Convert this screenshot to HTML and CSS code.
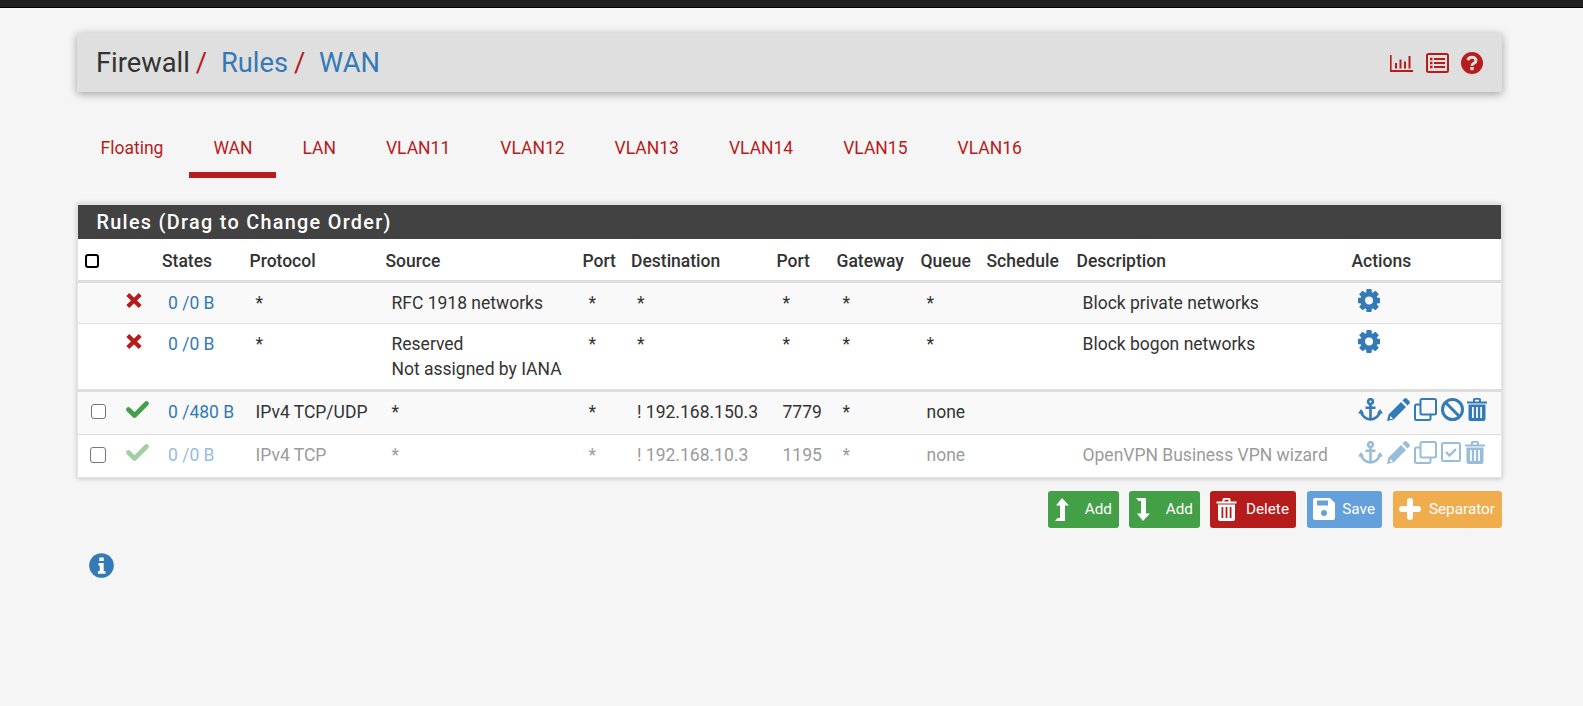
FILE: index.html
```html
<!DOCTYPE html>
<html lang="en">
<head>
<meta charset="utf-8">
<title>Firewall: Rules: WAN</title>
<link rel="stylesheet" href="styles.css">
</head>
<body>
<svg class="sprite" aria-hidden="true">
  <symbol id="i-bars" viewBox="0 0 23 17"><path fill="currentColor" d="M0 0h1.600v15H23v2H0zM5 8h2v5.500H5zM9.500 4.500h2v9h-2zM14 6.500h2v7h-2zM18.500 1h2v12.500h-2z"/></symbol>
  <symbol id="i-list" viewBox="0 0 23 20"><g fill="none" stroke="currentColor"><rect x="1" y="1" width="21" height="18" rx="1.500" stroke-width="2"/><path stroke-width="2" d="M8 6h11M8 10h11M8 14h11"/></g><path fill="currentColor" d="M4 4.800h2.500v2.400H4zM4 8.800h2.500v2.400H4zM4 12.800h2.500v2.400H4z"/></symbol>
  <symbol id="i-help" viewBox="0 0 22 22"><circle cx="11" cy="11" r="11" fill="currentColor"/><path fill="none" stroke="#dfdfdf" stroke-width="3" d="M7 8.200c.4-2 2-3 4-3 2.300 0 4 1.300 4 3.200 0 2.800-4 2.800-4 5.300"/><rect x="9.300" y="15" width="3.400" height="3.200" fill="#dfdfdf"/></symbol>
  <symbol id="i-times" viewBox="0 0 16 15"><path fill="none" stroke="currentColor" stroke-width="4.200" d="M1.800 1.500l12.400 12M14.200 1.500l-12.400 12"/></symbol>
  <symbol id="i-check" viewBox="0 0 23 17"><path fill="none" stroke="currentColor" stroke-width="4.600" stroke-linecap="round" stroke-linejoin="round" d="M2.500 8.500l6 6L20.500 2.500"/></symbol>
  <symbol id="i-cog" viewBox="0 0 22 23"><g fill="currentColor"><g id="cog-teeth"><rect x="8.300" y="0" width="5.400" height="5" rx="1"/><rect x="8.300" y="18" width="5.400" height="5" rx="1"/></g><use href="#cog-teeth" transform="rotate(90 11 11.500)"/><use href="#cog-teeth" transform="rotate(45 11 11.500)"/><use href="#cog-teeth" transform="rotate(135 11 11.500)"/></g><circle cx="11" cy="11.500" r="6.400" fill="none" stroke="currentColor" stroke-width="4.800"/></symbol>
  <symbol id="i-anchor" viewBox="0 0 25 23"><g fill="none" stroke="currentColor" stroke-width="2.600"><circle cx="12.500" cy="3.600" r="2.400"/><path d="M12.500 6v15.500M7.500 9.800h10M3 13c.5 5 5 8 9.500 8.500C17 21 21.500 18 22 13"/></g><path fill="currentColor" d="M0 15.500l3-4.500 3 4.500zM19 15.500l3-4.500 3 4.500z"/></symbol>
  <symbol id="i-pencil" viewBox="0 0 23 23"><path fill="currentColor" d="M0 23l1.500-6.500L14 4l5 5L6.500 21.500zM2.800 20.200l1 1 2.200-.6-2.600-2.600zM15.500 2.500L17.200.8a2 2 0 0 1 2.800 0l2.200 2.200a2 2 0 0 1 0 2.800L20.500 7.500z"/></symbol>
  <symbol id="i-clone" viewBox="0 0 23 23"><g fill="none" stroke="currentColor" stroke-width="2"><rect x="6.500" y="1" width="15.500" height="15.500" rx="1.500"/><path d="M6.500 6.500H2.500A1.500 1.500 0 0 0 1 8v12.500A1.500 1.500 0 0 0 2.500 22H15a1.500 1.500 0 0 0 1.500-1.500v-4"/></g></symbol>
  <symbol id="i-ban" viewBox="0 0 23 23"><g fill="none" stroke="currentColor" stroke-width="3"><circle cx="11.500" cy="11.500" r="10"/><path d="M4.500 4.500l14 14"/></g></symbol>
  <symbol id="i-trash" viewBox="0 0 20 23"><path fill="currentColor" fill-rule="evenodd" d="M0 3.500h6V1.500A1.500 1.500 0 0 1 7.500 0h5A1.500 1.500 0 0 1 14 1.500v2h6v2H0zM8 1.800v1.700h4V1.800zM1.500 6.500h17V21a2 2 0 0 1-2 2h-13a2 2 0 0 1-2-2zM5 9v11h1.800V9zM9.100 9v11h1.800V9zM13.200 9v11H15V9z"/></symbol>
  <symbol id="i-checkbox" viewBox="0 0 20 20"><g fill="none" stroke="currentColor"><rect x="1" y="1" width="18" height="18" rx="1.500" stroke-width="2"/><path stroke-width="2.400" d="M5 10l3.500 3.500L15 7"/></g></symbol>
  <symbol id="i-lvlup" viewBox="0 0 14 23"><path fill="currentColor" d="M7 0l7 7.500H10V23H0l2.500-3H5V7.500H1z"/></symbol>
  <symbol id="i-lvldown" viewBox="0 0 14 23"><path fill="currentColor" d="M0 0h10v15.500h4L7 23 1 15.500h4V3H2.500z"/></symbol>
  <symbol id="i-save" viewBox="0 0 22 22"><path fill="#fff" fill-rule="evenodd" d="M2 0h15l5 5v15a2 2 0 0 1-2 2H2a2 2 0 0 1-2-2V2a2 2 0 0 1 2-2zM4 2.500v5h11v-5zM11 12a3 3 0 1 0 0 6 3 3 0 0 0 0-6z"/></symbol>
  <symbol id="i-plus" viewBox="0 0 22 22"><path fill="none" stroke="#fff" stroke-width="6" stroke-linecap="round" d="M11 3v16M3 11h16"/></symbol>
  <symbol id="i-info" viewBox="0 0 25 25"><circle cx="12.500" cy="12.500" r="12.300" fill="currentColor"/><path fill="#fff" d="M10.300 4.500h4.400v3.500h-4.400zM9.500 10h5.200v8h1.800v2.800H9v-2.800h1.800v-5.200H9.500z"/></symbol>
</svg>

<div class="topbar"></div>
<main class="page">
  <header class="crumbs">
    <h1 class="crumb-title">Firewall<span class="sep">/</span><a class="crumb-link">Rules</a><span class="sep">/</span><a class="crumb-link">WAN</a></h1>
    <div class="crumb-icons">
      <svg class="ic-bars"><use href="#i-bars"/></svg>
      <svg class="ic-list"><use href="#i-list"/></svg>
      <svg class="ic-help"><use href="#i-help"/></svg>
    </div>
  </header>

  <nav class="tabs">
    <a class="tab">Floating</a>
    <a class="tab active">WAN</a>
    <a class="tab">LAN</a>
    <a class="tab">VLAN11</a>
    <a class="tab">VLAN12</a>
    <a class="tab">VLAN13</a>
    <a class="tab">VLAN14</a>
    <a class="tab">VLAN15</a>
    <a class="tab">VLAN16</a>
  </nav>

  <section class="panel">
    <h2 class="panel-title">Rules (Drag to Change Order)</h2>
    <table class="rules">
      <colgroup>
        <col class="c1"><col class="c2"><col class="c3"><col class="c4"><col class="c5"><col class="c6"><col class="c7"><col class="c8"><col class="c9"><col class="c10"><col class="c11"><col class="c12"><col class="c13">
      </colgroup>
      <thead>
        <tr>
          <th class="th-check"><input class="check-all" type="checkbox"></th>
          <th></th>
          <th>States</th>
          <th>Protocol</th>
          <th>Source</th>
          <th>Port</th>
          <th>Destination</th>
          <th>Port</th>
          <th>Gateway</th>
          <th>Queue</th>
          <th>Schedule</th>
          <th>Description</th>
          <th>Actions</th>
        </tr>
      </thead>
      <tbody>
        <tr class="r1 odd">
          <td></td>
          <td><svg class="ic-times"><use href="#i-times"/></svg></td>
          <td><a class="link">0 /0 B</a></td>
          <td>*</td>
          <td>RFC 1918 networks</td>
          <td>*</td>
          <td>*</td>
          <td>*</td>
          <td>*</td>
          <td>*</td>
          <td></td>
          <td>Block private networks</td>
          <td><div class="actions"><svg class="ic-cog"><use href="#i-cog"/></svg></div></td>
        </tr>
        <tr class="r2">
          <td></td>
          <td><svg class="ic-times"><use href="#i-times"/></svg></td>
          <td><a class="link">0 /0 B</a></td>
          <td>*</td>
          <td>Reserved<br>Not assigned by IANA</td>
          <td>*</td>
          <td>*</td>
          <td>*</td>
          <td>*</td>
          <td>*</td>
          <td></td>
          <td>Block bogon networks</td>
          <td><div class="actions"><svg class="ic-cog"><use href="#i-cog"/></svg></div></td>
        </tr>
        <tr class="r3 odd">
          <td class="td-check"><input class="row-check" type="checkbox"></td>
          <td><svg class="ic-check"><use href="#i-check"/></svg></td>
          <td><a class="link">0 /480 B</a></td>
          <td>IPv4 TCP/UDP</td>
          <td>*</td>
          <td>*</td>
          <td>! 192.168.150.3</td>
          <td>7779</td>
          <td>*</td>
          <td>none</td>
          <td></td>
          <td></td>
          <td>
            <div class="actions">
              <svg class="ic-anchor"><use href="#i-anchor"/></svg>
              <svg class="ic-box"><use href="#i-pencil"/></svg>
              <svg class="ic-box"><use href="#i-clone"/></svg>
              <svg class="ic-box"><use href="#i-ban"/></svg>
              <svg class="ic-trash tight"><use href="#i-trash"/></svg>
            </div>
          </td>
        </tr>
        <tr class="r4">
          <td class="td-check"><input class="row-check big" type="checkbox"></td>
          <td><svg class="ic-check"><use href="#i-check"/></svg></td>
          <td><a class="link">0 /0 B</a></td>
          <td>IPv4 TCP</td>
          <td>*</td>
          <td>*</td>
          <td>! 192.168.10.3</td>
          <td>1195</td>
          <td>*</td>
          <td>none</td>
          <td></td>
          <td>OpenVPN Business VPN wizard</td>
          <td>
            <div class="actions">
              <svg class="ic-anchor"><use href="#i-anchor"/></svg>
              <svg class="ic-box"><use href="#i-pencil"/></svg>
              <svg class="ic-box"><use href="#i-clone"/></svg>
              <svg class="ic-checkbox"><use href="#i-checkbox"/></svg>
              <svg class="ic-trash"><use href="#i-trash"/></svg>
            </div>
          </td>
        </tr>
      </tbody>
    </table>
  </section>

  <div class="buttons">
    <a class="btn green w71"><svg class="ic-lvl"><use href="#i-lvlup"/></svg><span>Add</span></a>
    <a class="btn green w71"><svg class="ic-lvl"><use href="#i-lvldown"/></svg><span>Add</span></a>
    <a class="btn red w86"><svg class="ic-btntrash"><use href="#i-trash"/></svg><span>Delete</span></a>
    <a class="btn blue w75"><svg class="ic-22"><use href="#i-save"/></svg><span>Save</span></a>
    <a class="btn orange w109"><svg class="ic-22"><use href="#i-plus"/></svg><span>Separator</span></a>
  </div>

  <svg class="ic-info"><use href="#i-info"/></svg>
</main>
</body>
</html>
```

FILE: styles.css
```css
* { box-sizing: border-box; }
html, body { margin: 0; height: 100%; }
body {
  background: #f5f5f5;
  color: #333;
  font-family: Roboto, "Liberation Sans", sans-serif;
  font-size: 17.5px;
  overflow: hidden;
}
svg { display: block; }
.sprite { display: none; }

.topbar { height: 8px; background: #212121; border-bottom: 1px solid #000; }
.page { padding: 25px 81px 0 77px; }

.crumbs {
  height: 59px;
  background: #dfdfdf;
  border-radius: 2px;
  box-shadow: 0 2px 8px rgba(0, 0, 0, .35);
  display: flex;
  align-items: center;
  justify-content: space-between;
  padding: 0 19px;
}
.crumb-title { margin: 0; padding-top: 2px; font-size: 27.3px; font-weight: 400; line-height: 1.1; color: #333; }
.crumb-link { color: #337ab7; }
.sep { color: #b71c1c; margin: 0 13.8px 0 6px; }
.crumb-icons { display: flex; align-items: center; color: #b71c1c; gap: 12.5px; }
.ic-bars { width: 23px; height: 17px; margin-top: 1px; }
.ic-list { width: 23px; height: 20px; }
.ic-help { width: 22px; height: 22px; }

.tabs { display: flex; margin: 30px 0 0 -0.5px; gap: 2px; }
.tab {
  height: 56px;
  padding: 2px 24px 0;
  display: flex;
  align-items: center;
  color: #b71c1c;
  border-bottom: 6px solid transparent;
}
.tab.active { border-bottom-color: #b71c1c; }

.panel {
  margin-top: 25px;
  background: #fff;
  border: 1px solid #e3e3e3;
  border-top-width: 2px;
  box-shadow: 0 1px 5px rgba(0, 0, 0, .2);
}
.panel-title {
  margin: 0;
  height: 34px;
  padding-left: 18.5px;
  background: #424242;
  color: #fff;
  font-size: 19.8px;
  font-weight: 500;
  letter-spacing: 1.32px;
  line-height: 36px;
}

.rules { width: 100%; table-layout: fixed; border-collapse: separate; border-spacing: 0; }
.c1 { width: 37px; }
.c2 { width: 42px; }
.c3 { width: 87.5px; }
.c4 { width: 136px; }
.c5 { width: 197px; }
.c6 { width: 48.5px; }
.c7 { width: 145.5px; }
.c8 { width: 60px; }
.c9 { width: 84px; }
.c10 { width: 66px; }
.c11 { width: 90px; }
.c12 { width: 275px; }
.rules th {
  height: 44px;
  padding: 2px 0 0 5px;
  text-align: left;
  font-weight: 500;
  border-bottom: 3px solid #ddd;
  white-space: nowrap;
}
.rules th.th-check { padding-left: 7px; }
.rules td {
  padding: 7px 0 7px 11px;
  line-height: 25px;
  vertical-align: top;
  border-bottom: 1px solid #ddd;
  white-space: nowrap;
}
.odd td { background: #f9f9f9; }
.r1 td { height: 41px; padding-top: 8px; }
.r2 td { height: 68px; padding-top: 8px; border-bottom-width: 3px; }
.r3 td { height: 43px; padding-top: 8px; }
.r4 td { height: 42px; padding-top: 8px; border-bottom: 0; color: #9b9b9b; }
.link { color: #337ab7; }
.r4 .link { color: #99bcdb; }

.check-all {
  appearance: none;
  display: block;
  width: 14px;
  height: 14px;
  margin: 0;
  border: 2px solid #000;
  border-radius: 3px;
  background: #fff;
}
.row-check {
  appearance: none;
  display: block;
  width: 15px;
  height: 15px;
  margin: 4px 0 0 2px;
  border: 1px solid #767676;
  border-radius: 3px;
  background: #fff;
}
.row-check.big { width: 16px; height: 16px; margin-top: 4px; margin-left: 1px; }

.ic-times { width: 16px; height: 15px; margin-top: 2px; color: #b71c1c; }
.ic-check { width: 23px; height: 17px; margin-top: 1px; color: #43a047; }
.r4 .ic-check { margin-top: 0.5px; color: #a1cfa3; }

.actions { display: flex; gap: 4px; margin-top: -2px; color: #337ab7; }
.r4 .actions { color: #99bcdb; }
.ic-cog { width: 22px; height: 23px; }
.ic-anchor { width: 25px; height: 23px; }
.ic-box { width: 23px; height: 23px; }
.ic-trash { width: 20px; height: 23px; }
.ic-trash.tight { margin-left: -1px; }
.ic-checkbox { width: 20px; height: 20px; margin-top: 1px; }

.buttons { display: flex; justify-content: flex-end; gap: 10px; margin-top: 13px; }
.btn {
  height: 37px;
  border-radius: 3px;
  display: flex;
  align-items: center;
  justify-content: space-between;
  color: #fff;
  font-size: 15.3px;
  padding: 0 7px 1px 6px;
}
.w71 { width: 71px; padding-left: 7px; }
.w86 { width: 86px; }
.w75 { width: 75px; margin-left: 1px; }
.w109 { width: 109px; margin-left: 1px; }
.green { background: #43a047; }
.red { background: #b71c1c; }
.blue { background: #64a0dc; }
.orange { background: #f0ad4e; }
.ic-lvl { width: 14px; height: 23px; color: #fff; }
.ic-btntrash { width: 21px; height: 23px; color: #fff; }
.ic-22 { width: 22px; height: 22px; }

.ic-info { width: 25px; height: 25px; margin: 25px 0 0 12px; color: #337ab7; }
```
